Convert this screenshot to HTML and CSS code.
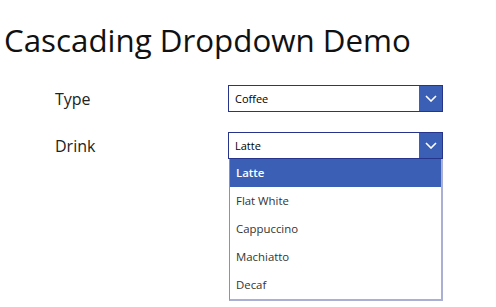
FILE: index.html
```html
<!DOCTYPE html>
<html>
<head>
<meta charset="utf-8">
<link rel="stylesheet" href="styles.css">
</head>
<body>
<h1 class="title">Cascading Dropdown Demo</h1>
<div class="form">
  <div class="row">
    <div class="label">Type</div>
    <div class="field">
      <div class="dropdown">
        <div class="value">Coffee</div>
        <div class="chev"><svg width="12" height="7" viewBox="0 0 12 7"><path d="M1 1 L6 6 L11 1" fill="none" stroke="#fff" stroke-width="1.6"/></svg></div>
      </div>
    </div>
  </div>
  <div class="row">
    <div class="label">Drink</div>
    <div class="field">
      <div class="dropdown">
        <div class="value">Latte</div>
        <div class="chev"><svg width="12" height="7" viewBox="0 0 12 7"><path d="M1 1 L6 6 L11 1" fill="none" stroke="#fff" stroke-width="1.6"/></svg></div>
      </div>
      <div class="menu">
        <div class="item selected">Latte</div>
        <div class="item">Flat White</div>
        <div class="item">Cappuccino</div>
        <div class="item">Machiatto</div>
        <div class="item">Decaf</div>
      </div>
    </div>
  </div>
</div>
</body>
</html>
```
FILE: styles.css
```css
html, body {
  margin: 0;
  padding: 0;
  background: #fff;
  font-family: "Open Sans", sans-serif;
  color: #000;
}
.title {
  margin: 0;
  padding: 19px 0 0 4px;
  font-size: 31.3px;
  font-weight: 400;
  line-height: 42px;
  color: #111;
}
.form {
  display: flex;
  flex-direction: column;
  gap: 19px;
  padding-top: 24px;
}
.row {
  display: flex;
  align-items: flex-start;
}
.label {
  width: 173px;
  padding-left: 55px;
  padding-top: 1px;
  font-size: 16px;
  line-height: 27px;
  color: #222;
}
.field {
  display: flex;
  flex-direction: column;
  width: 215px;
}
.dropdown {
  height: 27px;
  box-sizing: border-box;
  border: 1px solid #27348b;
  display: flex;
}
.value {
  flex: 1;
  font-size: 11px;
  line-height: 25px;
  padding-left: 6px;
}
.chev {
  width: 23px;
  background: #3a5fb4;
  display: flex;
  align-items: center;
  justify-content: center;
}
.menu {
  width: 214px;
  margin-left: 1px;
  background: #fff;
  border-left: 1px solid #8890bb;
  border-right: 2px solid #a9b0d4;
  border-bottom: 2px solid #a9b0d4;
  box-sizing: border-box;
}
.item {
  height: 28px;
  line-height: 28px;
  padding-left: 6px;
  font-size: 11.4px;
  color: #333;
}
.item.selected {
  background: #3a5fb4;
  color: #fff;
  font-weight: 600;
}
```
